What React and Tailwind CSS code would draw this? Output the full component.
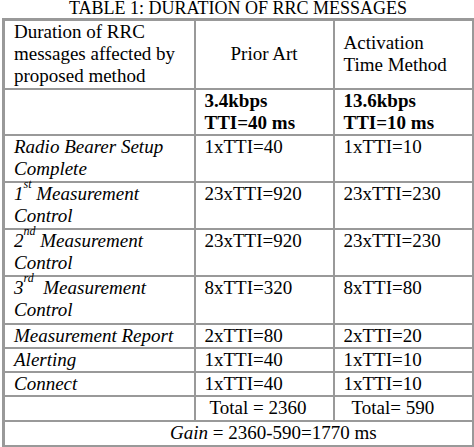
export default function App() {
  const cell = "border-2 border-[#999] align-top px-[9px]";
  const sup = "text-[12px] align-[6px] leading-none";
  const rows = [
    { label: <>Radio Bearer Setup Complete</>, a: "1xTTI=40", b: "1xTTI=10", h: "h-[47px]" },
    {
      label: <>1<sup className={sup}>st</sup> Measurement Control</>,
      a: "23xTTI=920",
      b: "23xTTI=230",
      h: "h-[47px]",
    },
    {
      label: <>2<sup className={sup}>nd</sup> Measurement Control</>,
      a: "23xTTI=920",
      b: "23xTTI=230",
      h: "h-[47px]",
    },
    {
      label: <>3<sup className={sup}>rd</sup>&nbsp; Measurement Control</>,
      a: "8xTTI=320",
      b: "8xTTI=80",
      h: "h-[48px]",
    },
    { label: <>Measurement Report</>, a: "2xTTI=80", b: "2xTTI=20", h: "h-[24px]" },
    { label: <>Alerting</>, a: "1xTTI=40", b: "1xTTI=10", h: "h-[24px]" },
    { label: <>Connect</>, a: "1xTTI=40", b: "1xTTI=10", h: "h-[24px]" },
  ];

  return (
    <div className="w-[474px] h-[447px] bg-white text-black overflow-hidden font-['Liberation_Serif',serif]">
      {/* Caption */}
      <div className="h-[18px] text-[18px] leading-[16px] text-center pl-[2px]">
        TABLE 1: DURATION OF RRC MESSAGES
      </div>

      <table className="ml-[2px] w-[470px] table-fixed border-collapse border-[3px] border-[#999] text-[19px] leading-[22px]">
        <colgroup>
          <col className="w-[191px]" />
          <col className="w-[139px]" />
          <col className="w-[140px]" />
        </colgroup>
        <tbody>
          <tr className="h-[69px]">
            <td className={cell}>Duration of RRC messages affected by proposed method</td>
            <td className="border-2 border-[#999] align-middle text-center px-[6px]">Prior Art</td>
            <td className="border-2 border-[#999] align-middle px-[9px]">Activation Time Method</td>
          </tr>
          <tr className="h-[46px]">
            <td className={cell}></td>
            <td className={`${cell} font-bold`}>
              3.4kbps
              <br />
              TTI=40 ms
            </td>
            <td className={`${cell} font-bold`}>
              13.6kbps
              <br />
              TTI=10 ms
            </td>
          </tr>
          {rows.map((r, i) => (
            <tr key={i} className={r.h}>
              <td className={`${cell} italic`}>{r.label}</td>
              <td className={cell}>{r.a}</td>
              <td className={cell}>{r.b}</td>
            </tr>
          ))}
          <tr className="h-[25px]">
            <td className={cell}></td>
            <td className="border-2 border-[#999] align-top pl-[14px]">Total = 2360</td>
            <td className="border-2 border-[#999] align-top pl-[17px]">Total= 590</td>
          </tr>
          <tr className="h-[26px]">
            <td colSpan={3} className="border-2 border-[#999] align-top pl-[165px]">
              <i>Gain</i> = 2360-590=1770 ms
            </td>
          </tr>
        </tbody>
      </table>
    </div>
  );
}
